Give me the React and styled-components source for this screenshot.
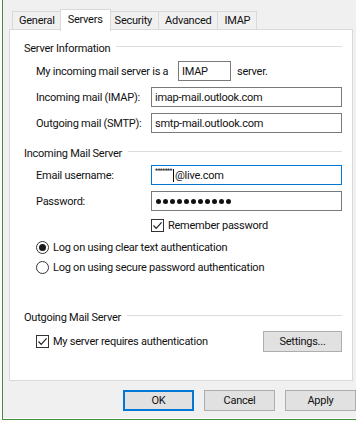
import React from "react";
import styled, { createGlobalStyle } from "styled-components";

const Global = createGlobalStyle`
  html, body { margin: 0; padding: 0; background: #fff; }
  body {
    font-family: Roboto, "Noto Sans", sans-serif;
    font-size: 11px;
    letter-spacing: -0.25px;
    color: #111;
  }
  * { box-sizing: border-box; }
`;

const Screen = styled.div`
  width: 356px;
  height: 425px;
  overflow: hidden;
  background: #fff;
  position: relative;
`;

const Frame = styled.div`
  margin-left: 2px;
  width: 380px;
  height: 420px;
  border-left: 1px solid #3f8f3f;
  border-bottom: 1px solid #3f8f3f;
`;

const Dialog = styled.div`
  height: 419px;
  background: #f0f0f0;
  border-bottom: 1px solid #fff;
  padding: 9px 0 0 6px;
  display: flex;
  flex-direction: column;
`;

const TabRow = styled.div`
  display: flex;
  align-items: flex-end;
  height: 21px;
  padding-left: 3px;
  position: relative;
  z-index: 1;
`;

const Tab = styled.div`
  height: ${(p) => (p.$active ? "22px" : "19px")};
  padding: ${(p) => (p.$active ? "2px 7px 0" : "1px 6px 0")};
  margin: ${(p) => (p.$active ? "0 -2px -1px" : "0")};
  background: ${(p) => (p.$active ? "#fff" : "#f0f0f0")};
  border: 1px solid #d9d9d9;
  border-bottom: ${(p) => (p.$active ? "none" : "1px solid #d9d9d9")};
  border-left: ${(p) => (p.$first || p.$active ? "1px solid #d9d9d9" : "none")};
  position: relative;
  z-index: ${(p) => (p.$active ? 2 : 1)};
  line-height: 16px;
  white-space: nowrap;
`;

const Panel = styled.div`
  width: 344px;
  height: 352px;
  margin-top: -1px;
  background: #fff;
  border: 1px solid #d9d9d9;
  padding: 11px 10px 0 14px;
  display: flex;
  flex-direction: column;
`;

const GroupHead = styled.div`
  display: flex;
  align-items: center;
  height: 14px;
  gap: 6px;
  margin-top: ${(p) => p.$mt || 0}px;
  white-space: nowrap;
  &::after {
    content: "";
    flex: 1;
    height: 1px;
    background: #dcdcdc;
    margin-top: -3px;
  }
`;

const Rows = styled.div`
  display: flex;
  flex-direction: column;
  padding-left: 12px;
  margin-top: ${(p) => p.$mt || 0}px;
  gap: ${(p) => p.$gap || 6}px;
`;

const FieldRow = styled.div`
  display: grid;
  grid-template-columns: 115px 1fr;
  align-items: center;
  height: 20px;
`;

const TypeRow = styled.div`
  display: grid;
  grid-template-columns: 142px 53px auto;
  align-items: center;
  height: 20px;
`;

const Label = styled.span`
  white-space: nowrap;
  padding-left: ${(p) => p.$pl || 0}px;
`;

const Input = styled.div`
  height: 20px;
  border: 1px solid ${(p) => (p.$focus ? "#0078d7" : "#7a7a7a")};
  background: #fff;
  padding-left: 3px;
  display: flex;
  align-items: center;
  white-space: nowrap;
  overflow: hidden;
`;

const Hidden = styled.span`
  font-size: 7px;
  letter-spacing: -0.6px;
  align-self: flex-start;
  margin-top: 2px;
  line-height: 7px;
`;

const Caret = styled.span`
  display: inline-block;
  width: 1px;
  height: 13px;
  background: #000;
  margin: 0 1px 0 1px;
`;

const Dots = styled.span`
  display: flex;
  gap: 2px;
  padding-left: 1px;
`;

const Dot = styled.span`
  width: 5px;
  height: 5px;
  border-radius: 50%;
  background: #111;
`;

const CheckRow = styled.div`
  display: flex;
  align-items: center;
  gap: 4px;
  height: 14px;
  padding-left: ${(p) => p.$indent || 0}px;
  margin-top: ${(p) => p.$mt || 0}px;
  white-space: nowrap;
`;

const Box = styled.span`
  width: 13px;
  height: 13px;
  border: 1px solid #333;
  background: #fff;
  display: inline-flex;
  align-items: center;
  justify-content: center;
  flex: none;
`;

const Radio = styled.span`
  width: 13px;
  height: 13px;
  border: 1px solid #333;
  border-radius: 50%;
  background: #fff;
  display: inline-flex;
  align-items: center;
  justify-content: center;
  flex: none;
  &::after {
    content: "";
    width: 7px;
    height: 7px;
    border-radius: 50%;
    background: ${(p) => (p.$on ? "#1a1a1a" : "transparent")};
  }
`;

const AuthRow = styled.div`
  display: flex;
  align-items: center;
  justify-content: space-between;
  height: 20px;
`;

const Button = styled.div`
  width: ${(p) => p.$w || 71}px;
  height: 21px;
  background: #e1e1e1;
  border: ${(p) => (p.$default ? "2px solid #0078d7" : "1px solid #adadad")};
  display: flex;
  align-items: center;
  justify-content: center;
  flex: none;
`;

const ButtonBar = styled.div`
  display: flex;
  gap: 10px;
  padding-left: 114px;
  margin-top: 9px;
`;

const Check = () => (
  <svg width="11" height="11" viewBox="0 0 11 11">
    <path d="M1.5 5.5 L4.2 8.3 L9.6 2.4" fill="none" stroke="#222" strokeWidth="1.2" />
  </svg>
);

export default function App() {
  return (
    <>
      <Global />
      <Screen>
        <Frame>
          <Dialog>
            <TabRow>
              <Tab $first>General</Tab>
              <Tab $active>Servers</Tab>
              <Tab>Security</Tab>
              <Tab>Advanced</Tab>
              <Tab>IMAP</Tab>
            </TabRow>
            <Panel>
              <GroupHead>Server Information</GroupHead>
              <Rows $mt={6}>
                <TypeRow>
                  <Label>My incoming mail server is a</Label>
                  <Input>IMAP</Input>
                  <Label $pl={6}>server.</Label>
                </TypeRow>
                <FieldRow>
                  <Label>Incoming mail (IMAP):</Label>
                  <Input>imap-mail.outlook.com</Input>
                </FieldRow>
                <FieldRow>
                  <Label>Outgoing mail (SMTP):</Label>
                  <Input>smtp-mail.outlook.com</Input>
                </FieldRow>
              </Rows>
              <GroupHead $mt={13}>Incoming Mail Server</GroupHead>
              <Rows $mt={5}>
                <FieldRow>
                  <Label>Email username:</Label>
                  <Input $focus>
                    <Hidden>*******</Hidden>
                    <Caret />
                    @live.com
                  </Input>
                </FieldRow>
                <FieldRow>
                  <Label>Password:</Label>
                  <Input>
                    <Dots>
                      {Array.from({ length: 11 }, (_, i) => (
                        <Dot key={i} />
                      ))}
                    </Dots>
                  </Input>
                </FieldRow>
              </Rows>
              <Rows $mt={7} $gap={6}>
                <CheckRow $indent={115}>
                  <Box><Check /></Box>
                  Remember password
                </CheckRow>
                <CheckRow $mt={2}>
                  <Radio $on />
                  Log on using clear text authentication
                </CheckRow>
                <CheckRow>
                  <Radio />
                  Log on using secure password authentication
                </CheckRow>
              </Rows>
              <GroupHead $mt={36}>Outgoing Mail Server</GroupHead>
              <Rows $mt={7}>
                <AuthRow>
                  <CheckRow>
                    <Box><Check /></Box>
                    My server requires authentication
                  </CheckRow>
                  <Button $w={79}>Settings...</Button>
                </AuthRow>
              </Rows>
            </Panel>
            <ButtonBar>
              <Button $default>OK</Button>
              <Button>Cancel</Button>
              <Button>Apply</Button>
            </ButtonBar>
          </Dialog>
        </Frame>
      </Screen>
    </>
  );
}
